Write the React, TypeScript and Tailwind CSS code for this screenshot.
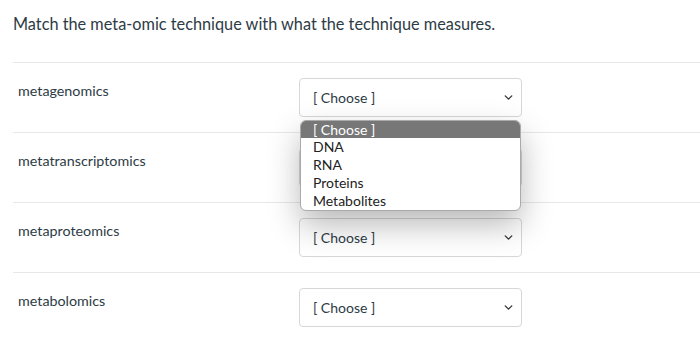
import { ChevronDown } from 'lucide-react';

const rows = ['metagenomics', 'metatranscriptomics', 'metaproteomics', 'metabolomics'];
const options = ['[ Choose ]', 'DNA', 'RNA', 'Proteins', 'Metabolites'];

const SelectBox = () => (
    <div className="w-[223px] h-[39px] border border-[#d7d7d7] rounded-[4px] bg-white flex items-center justify-between pl-[13px] pr-[6px] text-[14px] text-[#2d3b45]">
        <span>[ Choose ]</span>
        <ChevronDown className="w-[13px] h-[13px] text-[#333]" strokeWidth={2.5} />
    </div>
);

const App = () => {
    return (
        <div className="w-[700px] h-[345px] bg-white overflow-hidden pl-[13px] font-['Lato',sans-serif] text-[#2d3b45]">
            <h1 className="pt-[14px] h-[62px] text-[16.3px] leading-[20px]">
                Match the meta-omic technique with what the technique measures.
            </h1>

            <div className="relative">
                {rows.map((label) => (
                    <div key={label} className="flex h-[70px] border-t border-[#e8e8e8]">
                        <div className="w-[286px] pl-[5px] pt-[19px] text-[14.3px] leading-[18px]">{label}</div>
                        <div className="pt-[15px]">
                            <SelectBox />
                        </div>
                    </div>
                ))}

                {/* open dropdown over row 2 */}
                <div className="absolute left-[287px] top-[58px] w-[221px] rounded-[6px] border border-[#aaa] bg-white overflow-hidden shadow-[0_14px_32px_rgba(0,0,0,0.28)] text-[14px] leading-[18px] text-[#222]">
                    {options.map((opt, i) => (
                        <div
                            key={opt}
                            className={i === 0 ? 'bg-[#777] text-white pl-[12px] h-[17px] leading-[17px]' : 'pl-[12px] h-[18px]'}
                        >
                            {opt}
                        </div>
                    ))}
                </div>
            </div>
        </div>
    );
};

export default App;
